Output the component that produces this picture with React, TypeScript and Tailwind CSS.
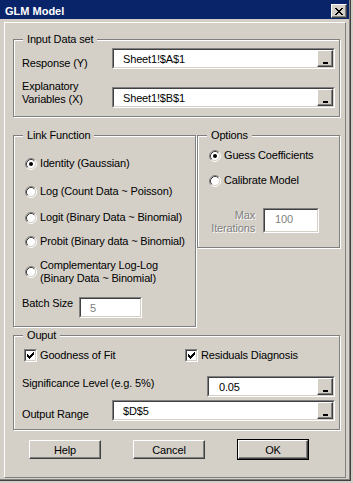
import React from 'react';

const raised =
  'border border-t-white border-l-white border-r-[#404040] border-b-[#404040] shadow-[inset_-1px_-1px_0_#808080]';
const sunkenOuter = 'border border-t-[#808080] border-l-[#808080] border-r-white border-b-white';
const sunkenInner = 'border border-t-[#404040] border-l-[#404040] border-r-[#d4d0c8] border-b-[#d4d0c8]';

function Group({ legend, className, children }: { legend: string; className: string; children?: React.ReactNode }) {
  return (
    <div
      className={`relative flex flex-col border border-[#808080] shadow-[inset_1px_1px_0_#fff,1px_1px_0_#fff] ${className}`}
    >
      <span className="absolute -top-[7px] left-[9px] bg-[#d4d0c8] px-[4px]">{legend}</span>
      {children}
    </div>
  );
}

function Radio({ checked }: { checked?: boolean }) {
  return (
    <svg width="12" height="12" viewBox="0 0 12 12" className="shrink-0">
      <circle cx="6" cy="6" r="4.5" fill="#fff" />
      <path d="M2.11 9.89A5.5 5.5 0 0 1 9.89 2.11" fill="none" stroke="#808080" />
      <path d="M9.89 2.11A5.5 5.5 0 0 1 2.11 9.89" fill="none" stroke="#fff" />
      <path d="M2.82 9.18A4.5 4.5 0 0 1 9.18 2.82" fill="none" stroke="#404040" />
      <path d="M9.18 2.82A4.5 4.5 0 0 1 2.82 9.18" fill="none" stroke="#d4d0c8" />
      {checked && <circle cx="6" cy="6" r="2" fill="#000" />}
    </svg>
  );
}

function Opt({ checked, className, children }: { checked?: boolean; className: string; children: React.ReactNode }) {
  return (
    <div className={`flex items-center ${className}`}>
      <Radio checked={checked} />
      <span className="ml-[3px]">{children}</span>
    </div>
  );
}

function CheckBox({ label }: { label: string }) {
  return (
    <div className="flex h-[13px] items-center">
      <div className={`flex h-[13px] w-[13px] shrink-0 ${sunkenOuter}`}>
        <div className={`flex flex-1 items-center justify-center bg-white ${sunkenInner}`}>
          <svg width="7" height="7" viewBox="0 0 7 7" shapeRendering="crispEdges">
            <path d="M0 2h1v3H0z M1 3h1v3H1z M2 4h1v3H2z M3 3h1v3H3z M4 2h1v3H4z M5 1h1v3H5z M6 0h1v3H6z" fill="#000" />
          </svg>
        </div>
      </div>
      <span className="ml-[3px]">{label}</span>
    </div>
  );
}

function Field({
  className,
  value,
  pad = 'pl-[9px]',
  btn = false,
  disabled = false,
}: {
  className: string;
  value: string;
  pad?: string;
  btn?: boolean;
  disabled?: boolean;
}) {
  return (
    <div className={`flex shrink-0 ${sunkenOuter} ${className}`}>
      <div className={`flex flex-1 bg-white ${sunkenInner}`}>
        <span className={`flex-1 pt-[3px] ${pad} ${disabled ? 'text-[#808080]' : ''}`}>{value}</span>
        {btn && (
          <div className={`flex w-[16px] items-end justify-center bg-[#d4d0c8] pb-[2px] ${raised}`}>
            <div className="h-[2px] w-[5px] bg-black" />
          </div>
        )}
      </div>
    </div>
  );
}

function Btn({ label }: { label: string }) {
  return (
    <button className={`flex h-[19px] w-[72px] items-center justify-center bg-[#d4d0c8] pt-[1px] ${raised}`}>
      {label}
    </button>
  );
}

export default function App() {
  return (
    <div className="h-[483px] w-[353px] bg-[#d4d0c8] font-['Liberation_Sans',Arial,sans-serif] text-[11px] leading-[13px] tracking-[-0.15px] text-black select-none">
      <div className="h-[481px] w-[351px] border-r border-b border-r-[#404040] border-b-[#404040]">
        <div className="flex h-[480px] w-[350px] flex-col border-r border-b border-r-[#808080] border-b-[#808080]">
          {/* title bar */}
          <div className="flex h-[19px] w-[349px] shrink-0 items-start justify-between bg-[#0a246a]">
            <span className="pl-[5px] pt-[5px] font-bold tracking-normal text-white">GLM Model</span>
            <button
              className={`mr-[2px] mt-[4px] flex h-[14px] w-[16px] items-center justify-center bg-[#d4d0c8] pt-[1px] ${raised}`}
            >
              <svg width="8" height="7" viewBox="0 0 8 7" shapeRendering="crispEdges">
                <path
                  d="M0 0h2v1H0z M6 0h2v1H6z M1 1h2v1H1z M5 1h2v1H5z M2 2h4v1H2z M3 3h2v1H3z M2 4h4v1H2z M1 5h2v1H1z M5 5h2v1H5z M0 6h2v1H0z M6 6h2v1H6z"
                  fill="#000"
                />
              </svg>
            </button>
          </div>

          {/* form panel */}
          <div className="ml-[4px] mt-[3px] flex h-[456px] w-[342px] flex-col border border-t-white border-l-white border-r-[#808080] border-b-[#808080]">
            <Group legend="Input Data set" className="ml-[8px] mt-[16px] h-[78px] w-[327px]">
              <div className="mt-[8px] flex items-start">
                <span className="ml-[8px] w-[90px] pt-[9px]">Response (Y)</span>
                <Field className="h-[21px] w-[223px]" value="Sheet1!$A$1" btn />
              </div>
              <div className="mt-[10px] flex items-start">
                <span className="ml-[8px] w-[90px]">
                  Explanatory
                  <br />
                  Variables (X)
                </span>
                <Field className="mt-[7px] h-[21px] w-[223px]" value="Sheet1!$B$1" btn />
              </div>
            </Group>

            <div className="ml-[8px] mt-[18px] flex items-start">
              <Group legend="Link Function" className="h-[192px] w-[183px]">
                <Opt checked className="ml-[11px] mt-[21px] h-[13px]">
                  Identity (Gaussian)
                </Opt>
                <Opt className="ml-[11px] mt-[15px] h-[13px]">Log (Count Data ~ Poisson)</Opt>
                <Opt className="ml-[11px] mt-[13px] h-[13px]">Logit (Binary Data ~ Binomial)</Opt>
                <Opt className="ml-[11px] mt-[11px] h-[13px]">Probit (Binary data ~ Binomial)</Opt>
                <Opt className="ml-[11px] mt-[11px]">
                  Complementary Log-Log
                  <br />
                  (Binary Data ~ Binomial)
                </Opt>
                <div className="mt-[12px] flex items-start">
                  <span className="ml-[8px] w-[57px]">Batch Size</span>
                  <Field className="h-[21px] w-[63px]" value="5" disabled />
                </div>
              </Group>

              <Group legend="Options" className="ml-[1px] h-[113px] w-[143px]">
                <Opt checked className="ml-[11px] mt-[13px] h-[13px]">
                  Guess Coefficients
                </Opt>
                <Opt className="ml-[11px] mt-[12px] h-[13px]">Calibrate Model</Opt>
                <div className="mt-[21px] flex items-start">
                  <span className="w-[57px] pt-[1px] text-right text-[#808080] [text-shadow:1px_1px_0_#fff]">
                    Max
                    <br />
                    Iterations
                  </span>
                  <Field className="ml-[8px] h-[25px] w-[56px]" value="100" pad="pl-[10px]" disabled />
                </div>
              </Group>
            </div>

            <Group legend="Ouput" className="ml-[8px] mt-[8px] h-[95px] w-[327px]">
              <div className="ml-[10px] mt-[13px] flex">
                <div className="w-[161px]">
                  <CheckBox label="Goodness of Fit" />
                </div>
                <CheckBox label="Residuals Diagnosis" />
              </div>
              <div className="mt-[14px] flex items-start">
                <span className="ml-[8px] mt-[1px] w-[185px]">Significance Level (e.g. 5%)</span>
                <Field className="h-[21px] w-[128px]" value="0.05" pad="pl-[10px]" btn />
              </div>
              <div className="mt-[3px] flex items-start">
                <span className="ml-[8px] w-[90px] pt-[8px]">Output Range</span>
                <Field className="h-[21px] w-[223px]" value="$D$5" btn />
              </div>
            </Group>

            <div className="ml-[24px] mt-[9px] flex h-[21px] items-center gap-[32px]">
              <Btn label="Help" />
              <Btn label="Cancel" />
              <div className="flex h-[21px] w-[72px] border border-black">
                <button className={`flex flex-1 items-center justify-center bg-[#d4d0c8] pt-[1px] ${raised}`}>OK</button>
              </div>
            </div>
          </div>
        </div>
      </div>
    </div>
  );
}
